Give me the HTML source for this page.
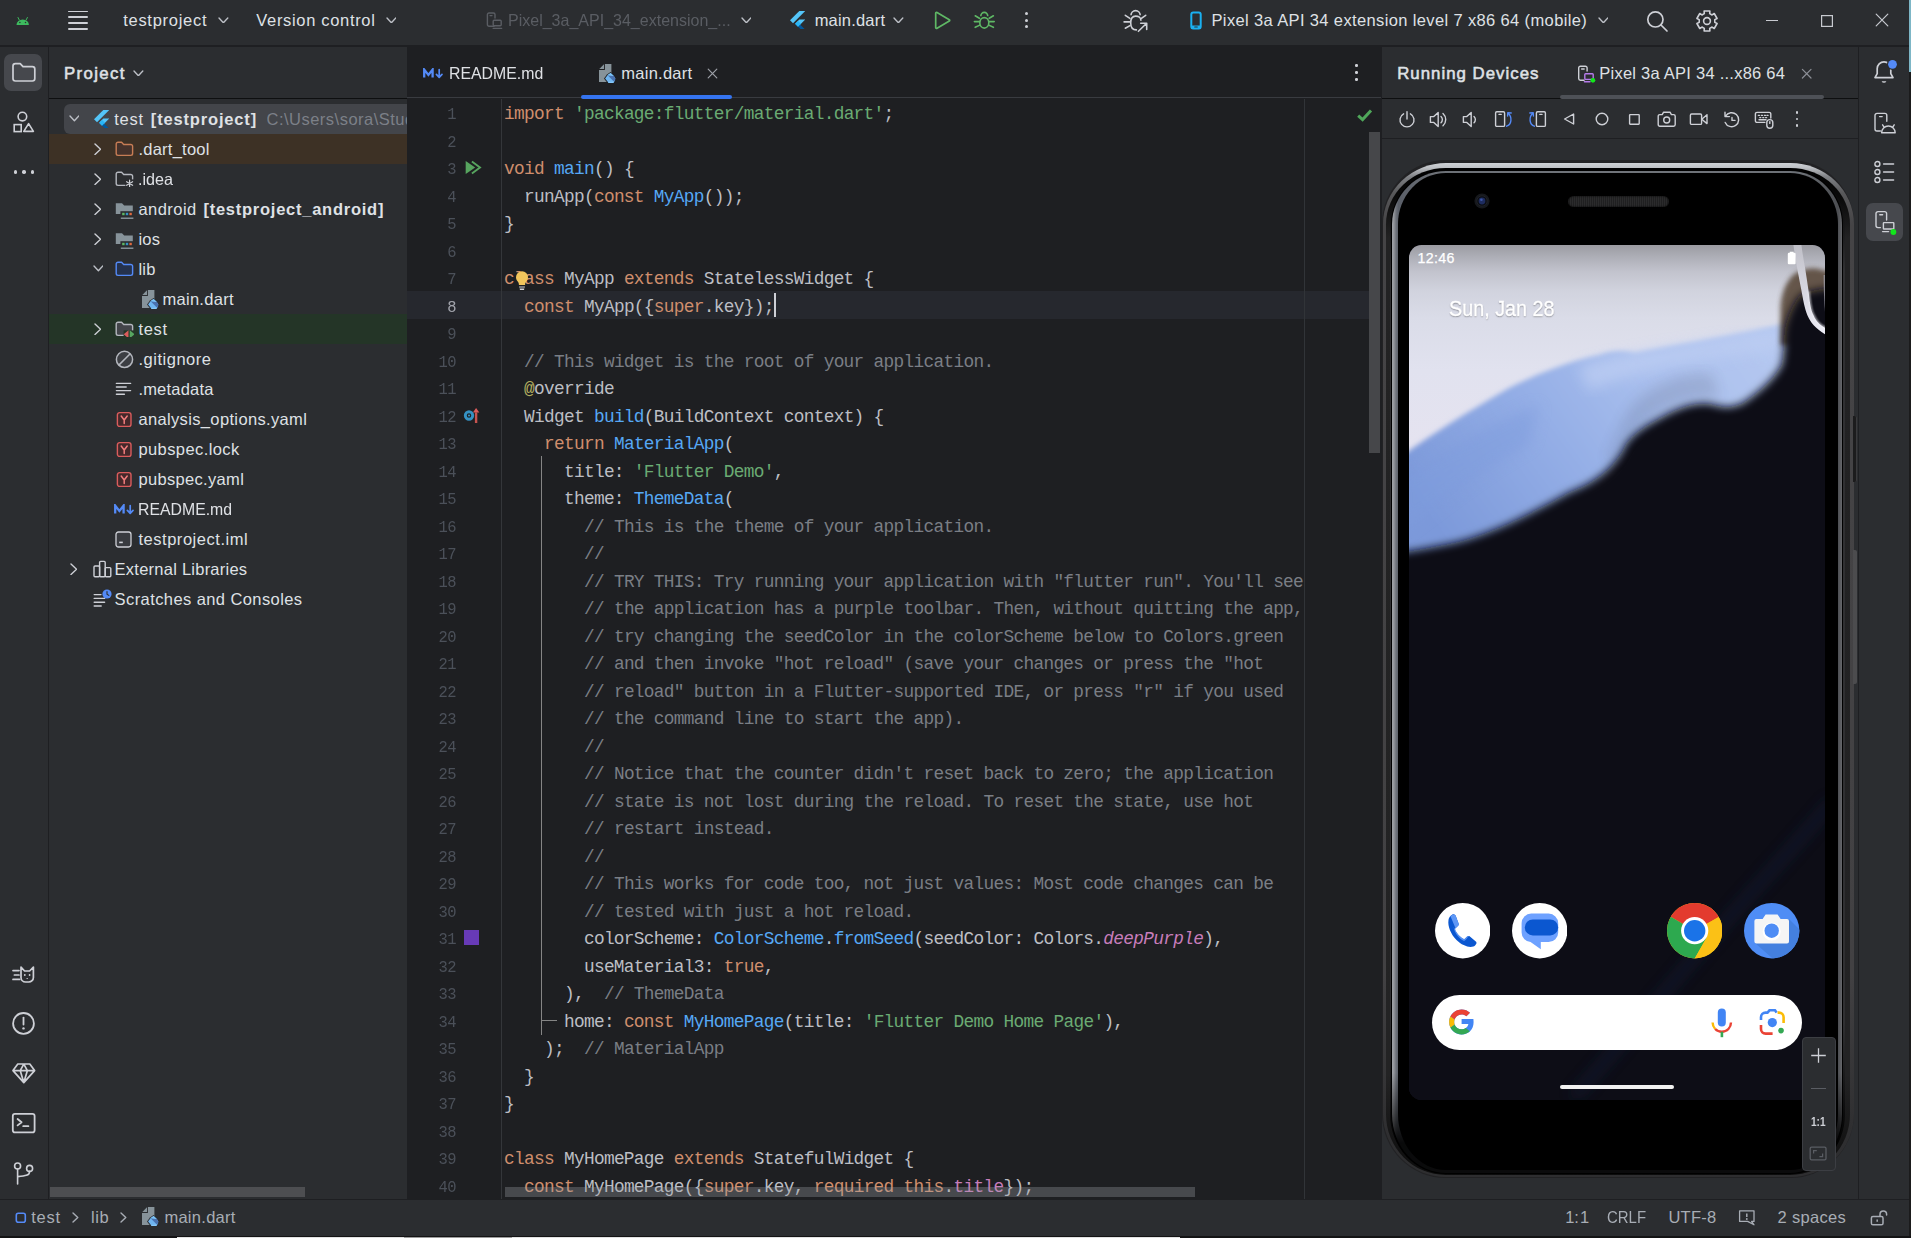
<!DOCTYPE html>
<html><head><meta charset="utf-8"><title>testproject – main.dart</title><style>
html,body{margin:0;padding:0;background:#2B2D30;overflow:hidden}
body{width:1911px;height:1238px;position:relative;font-family:"Liberation Sans",sans-serif;}
.t{position:absolute;white-space:pre;line-height:20px;font-family:"Liberation Sans",sans-serif;}
.m{font-family:"Liberation Mono",monospace;}
.r{position:absolute;display:block}
.code{position:absolute;white-space:pre;font-family:"Liberation Mono",monospace;font-size:17.8px;letter-spacing:-0.682px;line-height:27.5px;color:#BCBEC4;left:504px}
.ln{position:absolute;white-space:pre;font-family:"Liberation Mono",monospace;font-size:17.2px;letter-spacing:-0.6px;line-height:27.5px;color:#4B5059;text-align:right;width:60px;left:398px;transform:scaleX(0.9);transform-origin:100% 50%}
.k{color:#CF8E6D}.s{color:#6AAB73}.f{color:#56A8F5}.c{color:#7A7E85}.a{color:#B3AE60}.p{color:#C77DBB}
</style></head><body>
<!-- g_top -->
<div class="r" style="left:0px;top:0px;width:1909px;height:45px;background:#2B2D30;"></div>
<div class="r" style="left:0px;top:45px;width:1909px;height:2px;background:#1E1F22;"></div>
<svg class="r" style="left:16.3px;top:15.6px;" width="14" height="10" viewBox="0 0 14 10" fill="none"><path d="M0.5 9 A6.2 5.6 0 0 1 12.9 9 Z" fill="#3DBA5E"/><path d="M3.3 4 L2 1.5 M10.1 4 L11.4 1.5" stroke="#3DBA5E" stroke-width="1" stroke-linecap="round"/><circle cx="3.9" cy="6.4" r="0.75" fill="#2B2D30"/><circle cx="9.5" cy="6.4" r="0.75" fill="#2B2D30"/></svg>
<div class="r" style="left:68.3px;top:10.6px;width:20px;height:1.8px;background:#CED0D6;border-radius:1px;"></div>
<div class="r" style="left:68.3px;top:16.400000000000002px;width:20px;height:1.8px;background:#CED0D6;border-radius:1px;"></div>
<div class="r" style="left:68.3px;top:22.1px;width:20px;height:1.8px;background:#CED0D6;border-radius:1px;"></div>
<div class="r" style="left:68.3px;top:27.900000000000002px;width:20px;height:1.8px;background:#CED0D6;border-radius:1px;"></div>
<span class="t" style="left:123.20px;top:10px;line-height:20px;font-size:16.5px;color:#DFE1E5;letter-spacing:0.718px;">testproject</span>
<svg class="r" style="left:217.9px;top:16.5px;" width="10.8" height="6.8" viewBox="0 0 10.8 6.8" fill="none"><path d="M1 1 L5.40 5.80 L9.80 1" stroke="#BDC0C7" stroke-width="1.35" stroke-linecap="round" stroke-linejoin="round"/></svg>
<span class="t" style="left:256.30px;top:10px;line-height:20px;font-size:16.5px;color:#DFE1E5;letter-spacing:0.675px;">Version control</span>
<svg class="r" style="left:385.7px;top:16.5px;" width="10.8" height="6.8" viewBox="0 0 10.8 6.8" fill="none"><path d="M1 1 L5.40 5.80 L9.80 1" stroke="#BDC0C7" stroke-width="1.35" stroke-linecap="round" stroke-linejoin="round"/></svg>
<svg class="r" style="left:486px;top:12px;" width="17" height="18" viewBox="0 0 17 18" fill="none"><path d="M8.6 14.2 H3 A1.6 1.6 0 0 1 1.4 12.6 V2.6 A1.6 1.6 0 0 1 3 1 H7.4 A1.6 1.6 0 0 1 9 2.6 V6.6" stroke="#5A5D63" stroke-width="1.4"/><path d="M4 3.6 H6" stroke="#5A5D63" stroke-width="1.3" stroke-linecap="round"/><rect x="7.2" y="8.2" width="8" height="5.6" rx="1" stroke="#5A5D63" stroke-width="1.4"/><path d="M7.2 16.4 H15.6" stroke="#5A5D63" stroke-width="1.4" stroke-linecap="round"/></svg>
<span class="t" style="left:508.20px;top:10px;line-height:20px;font-size:16.5px;color:#5A5D63;transform:scaleX(0.9706);transform-origin:0 50%;">Pixel_3a_API_34_extension_...</span>
<svg class="r" style="left:740.7px;top:16.5px;" width="10.8" height="6.8" viewBox="0 0 10.8 6.8" fill="none"><path d="M1 1 L5.40 5.80 L9.80 1" stroke="#BDC0C7" stroke-width="1.35" stroke-linecap="round" stroke-linejoin="round"/></svg>
<svg class="r" style="left:789.6px;top:10.5px;" width="15.2" height="18.6" viewBox="0 0 15.2 18.6" fill="none"><path d="M9.3 0 L15.2 0 L3 12.2 L0 9.3 Z" fill="#54C5F8"/><path d="M9.3 8.6 L15.2 8.6 L8.1 15.7 L5.1 12.8 Z" fill="#54C5F8"/><path d="M5.1 12.8 L8.1 15.7 L11 18.6 L15.2 18.6 L8.1 11.5 Z" fill="#01579B"/><path d="M5.1 12.8 L8.1 9.9 L11 12.8 L8.1 15.7 Z" fill="#29B6F6"/></svg>
<span class="t" style="left:814.70px;top:10px;line-height:20px;font-size:16.5px;color:#DFE1E5;letter-spacing:0.190px;">main.dart</span>
<svg class="r" style="left:893.3px;top:16.5px;" width="10.8" height="6.8" viewBox="0 0 10.8 6.8" fill="none"><path d="M1 1 L5.40 5.80 L9.80 1" stroke="#BDC0C7" stroke-width="1.35" stroke-linecap="round" stroke-linejoin="round"/></svg>
<svg class="r" style="left:933px;top:9.5px;" width="20" height="21" viewBox="0 0 20 21" fill="none"><path d="M2.7 3.2 V17.6 a0.9 0.9 0 0 0 1.35 0.75 L16.3 11.1 a0.85 0.85 0 0 0 0 -1.45 L4.05 2.45 A0.9 0.9 0 0 0 2.7 3.2 Z" stroke="#5FB865" stroke-width="1.7" stroke-linejoin="round"/></svg>
<svg class="r" style="left:973px;top:9.5px;" width="23" height="21" viewBox="0 0 23 21" fill="none"><ellipse cx="11.3" cy="12.85" rx="4.5" ry="5.25" stroke="#5FB865" stroke-width="1.6"/><path d="M7.8 6.3 A3.5 3.9 0 0 1 14.8 6.3" stroke="#5FB865" stroke-width="1.6"/><path d="M2.2 5.8 L6.4 8.3 M20.4 5.8 L16.2 8.3 M1.4 11.6 H6.6 M16 11.6 H21.2 M2.2 17.3 L6.8 15.1 M20.4 17.3 L15.8 15.1" stroke="#5FB865" stroke-width="1.6" stroke-linecap="round"/></svg>
<div class="r" style="left:1025.4px;top:11.6px;width:3px;height:3px;background:#CED0D6;border-radius:50%;"></div>
<div class="r" style="left:1025.4px;top:18.5px;width:3px;height:3px;background:#CED0D6;border-radius:50%;"></div>
<div class="r" style="left:1025.4px;top:25.2px;width:3px;height:3px;background:#CED0D6;border-radius:50%;"></div>
<svg class="r" style="left:1123px;top:9px;" width="26" height="24" viewBox="0 0 26 24" fill="none"><path d="M8 6.3 A4.6 4.7 0 0 1 17.2 6.3" stroke="#CED0D6" stroke-width="1.6"/><path d="M17.9 11.3 C17.9 8.4 15.6 7.1 12.6 7.1 C9.6 7.1 7.7 9.4 7.7 14 C7.7 18.4 9.8 20.9 13.4 20.9" stroke="#CED0D6" stroke-width="1.6" stroke-linecap="round"/><path d="M2.3 6.3 L6.9 9.4 M1.1 12.9 H6.6 M2.3 19.2 L6.9 16.6 M22.7 6.3 L18.4 9.4" stroke="#CED0D6" stroke-width="1.6" stroke-linecap="round"/><path d="M15.4 22.3 L23.4 14.5 M17.7 14.3 H23.7 V20.4" stroke="#CED0D6" stroke-width="1.6" stroke-linecap="round" stroke-linejoin="round"/></svg>
<svg class="r" style="left:1189px;top:10.5px;" width="14" height="19" viewBox="0 0 14 19" fill="none"><rect x="2.3" y="1.6" width="9.4" height="15.8" rx="2" stroke="#1AB0F0" stroke-width="2"/><rect x="2" y="14.4" width="10" height="3.6" rx="1" fill="#1AB0F0"/><rect x="5.2" y="15.5" width="3.6" height="1.1" rx="0.55" fill="#2B2D30"/></svg>
<span class="t" style="left:1211.50px;top:10px;line-height:20px;font-size:16.5px;color:#DFE1E5;letter-spacing:0.366px;">Pixel 3a API 34 extension level 7 x86 64 (mobile)</span>
<svg class="r" style="left:1597.7px;top:16.5px;" width="10.8" height="6.8" viewBox="0 0 10.8 6.8" fill="none"><path d="M1 1 L5.40 5.80 L9.80 1" stroke="#BDC0C7" stroke-width="1.35" stroke-linecap="round" stroke-linejoin="round"/></svg>
<svg class="r" style="left:1645px;top:8.5px;" width="24" height="24" viewBox="0 0 24 24" fill="none"><circle cx="10.4" cy="10.4" r="7.6" stroke="#CED0D6" stroke-width="1.7"/><path d="M16 16 L22 22" stroke="#CED0D6" stroke-width="1.7" stroke-linecap="round"/></svg>
<svg class="r" style="left:1694.7px;top:8.5px;" width="24" height="24" viewBox="0 0 24 24" fill="none"><g transform="translate(12 12)"><path d="M-2.87 -10.00 L2.87 -10.00 L2.70 -7.42 L5.08 -6.05 L7.22 -7.48 L10.09 -2.52 L7.78 -1.37 L7.78 1.37 L10.09 2.52 L7.22 7.48 L5.08 6.05 L2.70 7.42 L2.87 10.00 L-2.87 10.00 L-2.70 7.42 L-5.08 6.05 L-7.22 7.48 L-10.09 2.52 L-7.78 1.37 L-7.78 -1.37 L-10.09 -2.52 L-7.22 -7.48 L-5.08 -6.05 L-2.70 -7.42 Z" stroke="#CED0D6" stroke-width="1.6" stroke-linejoin="round"/><circle r="3.4" stroke="#CED0D6" stroke-width="1.6"/></g></svg>
<div class="r" style="left:1766.4px;top:19.9px;width:12px;height:1.2px;background:#C8CAD0;"></div>
<svg class="r" style="left:1820px;top:13.6px;" width="14" height="14" viewBox="0 0 14 14" fill="none"><rect x="1.6" y="1.6" width="10.8" height="10.8" stroke="#C8CAD0" stroke-width="1.2"/></svg>
<svg class="r" style="left:1875.3px;top:13.3px;" width="14" height="14" viewBox="0 0 14 14" fill="none"><path d="M1.2 1.2 L12.8 12.8 M12.8 1.2 L1.2 12.8" stroke="#C8CAD0" stroke-width="1.2" stroke-linecap="round"/></svg>
<!-- g_left -->
<div class="r" style="left:0px;top:47px;width:48px;height:1152px;background:#2B2D30;"></div>
<div class="r" style="left:48px;top:47px;width:1px;height:1152px;background:#1E1F22;"></div>
<div class="r" style="left:49px;top:47px;width:358px;height:1152px;background:#2B2D30;"></div>
<div class="r" style="left:4px;top:54px;width:38px;height:37px;background:#46484D;border-radius:7px;"></div>
<svg class="r" style="left:11px;top:61px;" width="26" height="23" viewBox="0 0 26 23" fill="none"><path d="M2 5 A2.4 2.4 0 0 1 4.4 2.6 H9.2 L12 5.6 H21.4 A2.4 2.4 0 0 1 23.8 8 V17.6 A2.4 2.4 0 0 1 21.4 20 H4.4 A2.4 2.4 0 0 1 2 17.6 Z" stroke="#CED0D6" stroke-width="1.7" stroke-linejoin="round"/></svg>
<svg class="r" style="left:12px;top:110px;" width="24" height="24" viewBox="0 0 24 24" fill="none"><circle cx="10.4" cy="6.6" r="4.3" stroke="#CED0D6" stroke-width="1.6"/><rect x="2.2" y="14.6" width="7" height="7" stroke="#CED0D6" stroke-width="1.6"/><path d="M16.6 13.6 L21.4 21.4 H11.8 Z" stroke="#CED0D6" stroke-width="1.6" stroke-linejoin="round"/></svg>
<div class="r" style="left:13.700000000000001px;top:170.3px;width:3.4px;height:3.4px;background:#CED0D6;border-radius:50%;"></div>
<div class="r" style="left:22.2px;top:170.3px;width:3.4px;height:3.4px;background:#CED0D6;border-radius:50%;"></div>
<div class="r" style="left:30.7px;top:170.3px;width:3.4px;height:3.4px;background:#CED0D6;border-radius:50%;"></div>
<svg class="r" style="left:11px;top:964px;" width="26" height="21" viewBox="0 0 26 21" fill="none"><path d="M10 3.2 L13.6 7 H18.6 L22.4 3.2 V13.4 A4.6 4.6 0 0 1 17.8 18 H14.6 A4.6 4.6 0 0 1 10 13.4 Z" stroke="#CED0D6" stroke-width="1.7" stroke-linejoin="round"/><path d="M2 6.6 H8 M3.4 11 H8 M2 15.4 H8.6" stroke="#CED0D6" stroke-width="1.7" stroke-linecap="round"/><circle cx="13.8" cy="11" r="0.9" fill="#CED0D6"/><circle cx="18.6" cy="11" r="0.9" fill="#CED0D6"/><path d="M15.2 14 H17.2 L16.2 15.2 Z" fill="#CED0D6"/></svg>
<svg class="r" style="left:11px;top:1011px;" width="26" height="26" viewBox="0 0 26 26" fill="none"><circle cx="12.5" cy="12.4" r="10.4" stroke="#CED0D6" stroke-width="1.8"/><path d="M12.5 6.6 V13.6" stroke="#CED0D6" stroke-width="1.8" stroke-linecap="round"/><circle cx="12.5" cy="17.4" r="1.2" fill="#CED0D6"/></svg>
<svg class="r" style="left:11px;top:1062px;" width="26" height="23" viewBox="0 0 26 23" fill="none"><path d="M6.8 2 H18.8 L23.6 8.6 L12.8 20.6 L2 8.6 Z M2 8.6 H23.6 M9.2 8.6 L12.8 2.2 L16.4 8.6 L12.8 20.4 Z" stroke="#CED0D6" stroke-width="1.7" stroke-linejoin="round"/></svg>
<svg class="r" style="left:11px;top:1112px;" width="26" height="23" viewBox="0 0 26 23" fill="none"><rect x="1.8" y="1.8" width="21.8" height="18.6" rx="2.2" stroke="#CED0D6" stroke-width="1.8"/><path d="M6.6 7 L10.6 10.2 L6.6 13.4 M12.2 14.2 H17.4" stroke="#CED0D6" stroke-width="1.8" stroke-linecap="round" stroke-linejoin="round"/></svg>
<svg class="r" style="left:12px;top:1161px;" width="24" height="25" viewBox="0 0 24 25" fill="none"><circle cx="5.6" cy="5" r="3" stroke="#CED0D6" stroke-width="1.6"/><circle cx="17.6" cy="7.4" r="3" stroke="#CED0D6" stroke-width="1.6"/><path d="M5.6 8 V23 M17.6 10.4 C17.6 14.6 13 15 5.8 15.6" stroke="#CED0D6" stroke-width="1.6" stroke-linecap="round"/></svg>
<span class="t" style="left:64.00px;top:63px;line-height:21px;font-size:16.8px;color:#DFE1E5;letter-spacing:1.369px;-webkit-text-stroke:0.55px #DFE1E5;">Project</span>
<svg class="r" style="left:132.8px;top:69.7px;" width="10.8" height="6.8" viewBox="0 0 10.8 6.8" fill="none"><path d="M1 1 L5.40 5.80 L9.80 1" stroke="#BDC0C7" stroke-width="1.35" stroke-linecap="round" stroke-linejoin="round"/></svg>
<div class="r" style="left:49px;top:97.6px;width:358px;height:1.6px;background:#0E0F10;"></div>
<div class="r" style="left:64px;top:104px;width:343px;height:29.5px;background:#43454A;border-radius:6px 0 0 6px;"></div>
<div class="r" style="left:49px;top:133.5px;width:358px;height:30.3px;background:#3D3125;"></div>
<div class="r" style="left:49px;top:313.8px;width:358px;height:30px;background:#243527;"></div>
<svg class="r" style="left:68.7px;top:115.1px;" width="10.8" height="6.8" viewBox="0 0 10.8 6.8" fill="none"><path d="M1 1 L5.40 5.80 L9.80 1" stroke="#BDC0C7" stroke-width="1.35" stroke-linecap="round" stroke-linejoin="round"/></svg>
<svg class="r" style="left:94px;top:109.6px;" width="15.2" height="18.6" viewBox="0 0 15.2 18.6" fill="none"><path d="M9.3 0 L15.2 0 L3 12.2 L0 9.3 Z" fill="#54C5F8"/><path d="M9.3 8.6 L15.2 8.6 L8.1 15.7 L5.1 12.8 Z" fill="#54C5F8"/><path d="M5.1 12.8 L8.1 15.7 L11 18.6 L15.2 18.6 L8.1 11.5 Z" fill="#01579B"/><path d="M5.1 12.8 L8.1 9.9 L11 12.8 L8.1 15.7 Z" fill="#29B6F6"/></svg>
<span class="t" style="left:114.30px;top:109px;line-height:20px;font-size:16.5px;color:#DFE1E5;letter-spacing:0.702px;">test</span>
<span class="t" style="left:150.80px;top:109px;line-height:20px;font-size:16.5px;color:#DFE1E5;letter-spacing:0.838px;font-weight:700;">[testproject]</span>
<div class="r" style="left:266.5px;top:104px;width:140.5px;height:30px;overflow:hidden"><span class="t" style="left:0.00px;top:5px;line-height:20px;font-size:16.5px;color:#7C8088;letter-spacing:0.488px;">C:\Users\sora\StudioProjects</span></div>
<svg class="r" style="left:93.8px;top:142.75px;" width="7.6" height="12.5" viewBox="0 0 7.6 12.5" fill="none"><path d="M1 1 L6.60 6.25 L1 11.50" stroke="#CED0D6" stroke-width="1.4" stroke-linecap="round" stroke-linejoin="round"/></svg>
<span class="t" style="left:138.40px;top:139px;line-height:20px;font-size:16.5px;color:#DFE1E5;letter-spacing:0.245px;">.dart_tool</span>
<svg class="r" style="left:114.5px;top:139.7px;" width="19" height="17" viewBox="0 0 19 17" fill="none"><path d="M1.2 4 A1.8 1.8 0 0 1 3 2.2 H6.6 L8.7 4.5 H15.8 A1.8 1.8 0 0 1 17.6 6.3 V13.6 A1.8 1.8 0 0 1 15.8 15.4 H3 A1.8 1.8 0 0 1 1.2 13.6 Z" stroke="#C77D55" stroke-width="1.4" fill="#45322B" stroke-linejoin="round"/></svg>
<svg class="r" style="left:93.8px;top:172.75px;" width="7.6" height="12.5" viewBox="0 0 7.6 12.5" fill="none"><path d="M1 1 L6.60 6.25 L1 11.50" stroke="#CED0D6" stroke-width="1.4" stroke-linecap="round" stroke-linejoin="round"/></svg>
<span class="t" style="left:138.40px;top:169px;line-height:20px;font-size:16.5px;color:#DFE1E5;transform:scaleX(0.9782);transform-origin:0 50%;">.idea</span>
<svg class="r" style="left:114.5px;top:169.7px;" width="19" height="17" viewBox="0 0 19 17" fill="none"><path d="M1.2 4 A1.8 1.8 0 0 1 3 2.2 H6.6 L8.7 4.5 H15.8 A1.8 1.8 0 0 1 17.6 6.3 V13.6 A1.8 1.8 0 0 1 15.8 15.4 H3 A1.8 1.8 0 0 1 1.2 13.6 Z" stroke="#B4B7BE" stroke-width="1.4" fill="none" stroke-linejoin="round"/><rect x="10.4" y="9.4" width="9" height="8" fill="#2B2D30"/><path d="M14.6 10 V17 M11.6 11.7 L17.6 15.3 M17.6 11.7 L11.6 15.3" stroke="#CED0D6" stroke-width="1.2" stroke-linecap="round"/></svg>
<svg class="r" style="left:93.8px;top:202.75px;" width="7.6" height="12.5" viewBox="0 0 7.6 12.5" fill="none"><path d="M1 1 L6.60 6.25 L1 11.50" stroke="#CED0D6" stroke-width="1.4" stroke-linecap="round" stroke-linejoin="round"/></svg>
<span class="t" style="left:138.40px;top:199px;line-height:20px;font-size:16.5px;color:#DFE1E5;letter-spacing:0.476px;">android</span>
<span class="t" style="left:203.40px;top:199px;line-height:20px;font-size:16.5px;color:#DFE1E5;letter-spacing:0.749px;font-weight:700;">[testproject_android]</span>
<svg class="r" style="left:114.5px;top:200px;" width="20" height="20" viewBox="0 0 20 20" fill="none"><path d="M0.8 3.2 H7 L9.2 5.6 H17.8 V14 H0.8 Z" fill="#87939A"/><rect x="5.4" y="11.2" width="13.2" height="5.4" fill="#2B2D30"/><rect x="7.2" y="12.8" width="2.4" height="2.4" fill="#5FB865"/><rect x="10.8" y="12.8" width="2.4" height="2.4" fill="#3592C4"/><rect x="14.4" y="12.8" width="2.4" height="2.4" fill="#E0693E"/><rect x="5.8" y="17.6" width="12.6" height="1.2" fill="#9AA7B0"/></svg>
<svg class="r" style="left:93.8px;top:232.75px;" width="7.6" height="12.5" viewBox="0 0 7.6 12.5" fill="none"><path d="M1 1 L6.60 6.25 L1 11.50" stroke="#CED0D6" stroke-width="1.4" stroke-linecap="round" stroke-linejoin="round"/></svg>
<span class="t" style="left:138.40px;top:229px;line-height:20px;font-size:16.5px;color:#DFE1E5;letter-spacing:0.304px;">ios</span>
<svg class="r" style="left:114.5px;top:230px;" width="20" height="20" viewBox="0 0 20 20" fill="none"><path d="M0.8 3.2 H7 L9.2 5.6 H17.8 V14 H0.8 Z" fill="#87939A"/><rect x="5.4" y="11.2" width="13.2" height="5.4" fill="#2B2D30"/><rect x="7.2" y="12.8" width="2.4" height="2.4" fill="#5FB865"/><rect x="10.8" y="12.8" width="2.4" height="2.4" fill="#3592C4"/><rect x="14.4" y="12.8" width="2.4" height="2.4" fill="#E0693E"/><rect x="5.8" y="17.6" width="12.6" height="1.2" fill="#9AA7B0"/></svg>
<svg class="r" style="left:92.7px;top:265.1px;" width="10.8" height="6.8" viewBox="0 0 10.8 6.8" fill="none"><path d="M1 1 L5.40 5.80 L9.80 1" stroke="#BDC0C7" stroke-width="1.35" stroke-linecap="round" stroke-linejoin="round"/></svg>
<span class="t" style="left:138.40px;top:259px;line-height:20px;font-size:16.5px;color:#DFE1E5;letter-spacing:0.246px;">lib</span>
<svg class="r" style="left:114.5px;top:259.7px;" width="19" height="17" viewBox="0 0 19 17" fill="none"><path d="M1.2 4 A1.8 1.8 0 0 1 3 2.2 H6.6 L8.7 4.5 H15.8 A1.8 1.8 0 0 1 17.6 6.3 V13.6 A1.8 1.8 0 0 1 15.8 15.4 H3 A1.8 1.8 0 0 1 1.2 13.6 Z" stroke="#548AF7" stroke-width="1.4" fill="#25324D" stroke-linejoin="round"/></svg>
<span class="t" style="left:162.40px;top:289px;line-height:20px;font-size:16.5px;color:#DFE1E5;letter-spacing:0.303px;">main.dart</span>
<svg class="r" style="left:141.79999999999998px;top:289.9px;" width="18" height="20" viewBox="0 0 18 20" fill="none"><path d="M0 5.9 H5.9 V0 H12.4 V17.9 H0 Z" fill="#87939A"/><path d="M0.3 5 L5 0.3 V5 Z" fill="#87939A"/><path d="M11.6 8 L15.5 11.4 L17.2 14.1 L17 16.8 L14.9 20 H9.2 L5 14.5 L8 10.4 Z" fill="#2B2D30"/><path d="M11.6 9.1 L14.8 12 L16.2 14.2 L16 16.4 L14.3 19 H9.7 L6.1 14.4 L8.7 11 Z" fill="#6FB5F0"/><path d="M8.7 11.2 L14.9 12.1 L16.2 14.2 L16 16.6 L14.8 17.4 Z" fill="#4A72B0"/><path d="M11.6 9.1 L14.8 12 L8.7 11.1 Z" fill="#7CC4F8"/><path d="M9.7 19 H14.3 L14.9 17.6 L9 17.9 Z" fill="#86C8FA"/></svg>
<svg class="r" style="left:93.8px;top:322.75px;" width="7.6" height="12.5" viewBox="0 0 7.6 12.5" fill="none"><path d="M1 1 L6.60 6.25 L1 11.50" stroke="#CED0D6" stroke-width="1.4" stroke-linecap="round" stroke-linejoin="round"/></svg>
<span class="t" style="left:138.40px;top:319px;line-height:20px;font-size:16.5px;color:#DFE1E5;letter-spacing:0.702px;">test</span>
<svg class="r" style="left:114.5px;top:319.7px;" width="19" height="17" viewBox="0 0 19 17" fill="none"><path d="M1.2 4 A1.8 1.8 0 0 1 3 2.2 H6.6 L8.7 4.5 H15.8 A1.8 1.8 0 0 1 17.6 6.3 V13.6 A1.8 1.8 0 0 1 15.8 15.4 H3 A1.8 1.8 0 0 1 1.2 13.6 Z" stroke="#B4B7BE" stroke-width="1.4" fill="#43454A" stroke-linejoin="round"/><rect x="8.6" y="10.4" width="11" height="8" fill="#243527"/><path d="M13.5 10.2 V18.4 L8.7 14.3 Z" fill="#DB5C5C"/><path d="M14.7 10.2 V18.4 L19.5 14.3 Z" fill="#57A55F"/></svg>
<span class="t" style="left:138.40px;top:349px;line-height:20px;font-size:16.5px;color:#DFE1E5;letter-spacing:0.525px;">.gitignore</span>
<svg class="r" style="left:114.5px;top:350px;" width="19" height="19" viewBox="0 0 19 19" fill="none"><circle cx="9.5" cy="9.4" r="8.1" stroke="#B4B7BE" stroke-width="1.5" fill="#3C3E43"/><path d="M3.8 15.1 L15.2 3.7" stroke="#B4B7BE" stroke-width="1.5"/></svg>
<span class="t" style="left:138.40px;top:379px;line-height:20px;font-size:16.5px;color:#DFE1E5;letter-spacing:0.202px;">.metadata</span>
<svg class="r" style="left:115px;top:382px;" width="17" height="14" viewBox="0 0 17 14" fill="none"><path d="M1.4 1.4 H15.6 M1.4 5 H11.2 M1.4 8.6 H15.6 M1.4 12.2 H9.4" stroke="#CED0D6" stroke-width="1.4" stroke-linecap="round"/></svg>
<span class="t" style="left:138.40px;top:409px;line-height:20px;font-size:16.5px;color:#DFE1E5;letter-spacing:0.354px;">analysis_options.yaml</span>
<svg class="r" style="left:115.6px;top:410.5px;" width="17" height="17" viewBox="0 0 17 17" fill="none"><rect x="1.4" y="1.6" width="13.6" height="13.8" rx="2.2" fill="#45282A" stroke="#DB5C5C" stroke-width="1.4"/><path d="M5.2 5 L8.2 9 L11.2 5 M8.2 9 V12.4" stroke="#F27D7D" stroke-width="1.5" stroke-linecap="round" stroke-linejoin="round"/></svg>
<span class="t" style="left:138.40px;top:439px;line-height:20px;font-size:16.5px;color:#DFE1E5;letter-spacing:0.417px;">pubspec.lock</span>
<svg class="r" style="left:115.6px;top:440.5px;" width="17" height="17" viewBox="0 0 17 17" fill="none"><rect x="1.4" y="1.6" width="13.6" height="13.8" rx="2.2" fill="#45282A" stroke="#DB5C5C" stroke-width="1.4"/><path d="M5.2 5 L8.2 9 L11.2 5 M8.2 9 V12.4" stroke="#F27D7D" stroke-width="1.5" stroke-linecap="round" stroke-linejoin="round"/></svg>
<span class="t" style="left:138.40px;top:469px;line-height:20px;font-size:16.5px;color:#DFE1E5;letter-spacing:0.327px;">pubspec.yaml</span>
<svg class="r" style="left:115.6px;top:470.5px;" width="17" height="17" viewBox="0 0 17 17" fill="none"><rect x="1.4" y="1.6" width="13.6" height="13.8" rx="2.2" fill="#45282A" stroke="#DB5C5C" stroke-width="1.4"/><path d="M5.2 5 L8.2 9 L11.2 5 M8.2 9 V12.4" stroke="#F27D7D" stroke-width="1.5" stroke-linecap="round" stroke-linejoin="round"/></svg>
<span class="t" style="left:138.40px;top:499px;line-height:20px;font-size:16.5px;color:#DFE1E5;transform:scaleX(0.9592);transform-origin:0 50%;">README.md</span>
<svg class="r" style="left:113.6px;top:503.7px;" width="21" height="11" viewBox="0 0 21 11" fill="none"><path d="M1.2 9.6 V1.6 L5.4 7 L9.6 1.6 V9.6" stroke="#548AF7" stroke-width="2.3" stroke-linejoin="miter"/><path d="M16.2 1.6 V9 M13.4 6.4 L16.2 9.3 L19 6.4" stroke="#548AF7" stroke-width="1.7" stroke-linecap="round" stroke-linejoin="round"/></svg>
<span class="t" style="left:138.40px;top:529px;line-height:20px;font-size:16.5px;color:#DFE1E5;letter-spacing:0.537px;">testproject.iml</span>
<svg class="r" style="left:114.5px;top:530.5px;" width="17" height="17" viewBox="0 0 17 17" fill="none"><rect x="1" y="1" width="15" height="15" rx="2.4" fill="#393B40" stroke="#CED0D6" stroke-width="1.3"/><rect x="4.2" y="10.6" width="3.6" height="1.6" fill="#CED0D6"/></svg>
<svg class="r" style="left:69.8px;top:562.75px;" width="7.6" height="12.5" viewBox="0 0 7.6 12.5" fill="none"><path d="M1 1 L6.60 6.25 L1 11.50" stroke="#CED0D6" stroke-width="1.4" stroke-linecap="round" stroke-linejoin="round"/></svg>
<svg class="r" style="left:92.6px;top:560px;" width="19" height="18" viewBox="0 0 19 18" fill="none"><rect x="1" y="6" width="5.6" height="10.8" rx="1" stroke="#CED0D6" stroke-width="1.4"/><rect x="6.6" y="1.4" width="5.6" height="15.4" rx="1" stroke="#CED0D6" stroke-width="1.4"/><rect x="12.2" y="7.6" width="5.6" height="9.2" rx="1" stroke="#CED0D6" stroke-width="1.4"/></svg>
<span class="t" style="left:114.60px;top:559px;line-height:20px;font-size:16.5px;color:#DFE1E5;letter-spacing:0.242px;">External Libraries</span>
<svg class="r" style="left:92.6px;top:589px;" width="20" height="19" viewBox="0 0 20 19" fill="none"><path d="M1.2 5.6 H8 M1.2 9.4 H11.6 M1.2 13.2 H11.6 M1.2 17 H8.2" stroke="#CED0D6" stroke-width="1.4" stroke-linecap="round"/><circle cx="14" cy="5" r="4.6" fill="#548AF7"/><path d="M14 2.6 V5.2 L15.8 6.4" stroke="#2B2D30" stroke-width="1.1" stroke-linecap="round" fill="none"/></svg>
<span class="t" style="left:114.60px;top:589px;line-height:20px;font-size:16.5px;color:#DFE1E5;letter-spacing:0.412px;">Scratches and Consoles</span>
<div class="r" style="left:50px;top:1187px;width:255px;height:10px;background:#4D4E51;"></div>
<!-- g_editor -->
<div class="r" style="left:407px;top:47px;width:974px;height:1152px;background:#1E1F22;"></div>
<div class="r" style="left:407px;top:97px;width:974px;height:1px;background:#393B40;"></div>
<svg class="r" style="left:423px;top:67.9px;" width="21" height="11" viewBox="0 0 21 11" fill="none"><path d="M1.2 9.6 V1.6 L5.4 7 L9.6 1.6 V9.6" stroke="#548AF7" stroke-width="2.3" stroke-linejoin="miter"/><path d="M16.2 1.6 V9 M13.4 6.4 L16.2 9.3 L19 6.4" stroke="#548AF7" stroke-width="1.7" stroke-linecap="round" stroke-linejoin="round"/></svg>
<span class="t" style="left:448.50px;top:63px;line-height:20px;font-size:16.5px;color:#DFE1E5;transform:scaleX(0.9603);transform-origin:0 50%;">README.md</span>
<svg class="r" style="left:599.4000000000001px;top:64.30000000000001px;" width="18" height="20" viewBox="0 0 18 20" fill="none"><path d="M0 5.9 H5.9 V0 H12.4 V17.9 H0 Z" fill="#87939A"/><path d="M0.3 5 L5 0.3 V5 Z" fill="#87939A"/><path d="M11.6 8 L15.5 11.4 L17.2 14.1 L17 16.8 L14.9 20 H9.2 L5 14.5 L8 10.4 Z" fill="#1E1F22"/><path d="M11.6 9.1 L14.8 12 L16.2 14.2 L16 16.4 L14.3 19 H9.7 L6.1 14.4 L8.7 11 Z" fill="#6FB5F0"/><path d="M8.7 11.2 L14.9 12.1 L16.2 14.2 L16 16.6 L14.8 17.4 Z" fill="#4A72B0"/><path d="M11.6 9.1 L14.8 12 L8.7 11.1 Z" fill="#7CC4F8"/><path d="M9.7 19 H14.3 L14.9 17.6 L9 17.9 Z" fill="#86C8FA"/></svg>
<span class="t" style="left:621.30px;top:63px;line-height:20px;font-size:16.5px;color:#DFE1E5;letter-spacing:0.253px;">main.dart</span>
<svg class="r" style="left:706.5px;top:67.7px;" width="11" height="11" viewBox="0 0 11 11" fill="none"><path d="M1.2 1.2 L9.8 9.8 M9.8 1.2 L1.2 9.8" stroke="#9DA0A8" stroke-width="1.2" stroke-linecap="round"/></svg>
<div class="r" style="left:581px;top:95.2px;width:151.4px;height:3.8px;background:#3574F0;border-radius:2px;"></div>
<div class="r" style="left:1355.3px;top:64.39999999999999px;width:2.4px;height:2.4px;background:#CED0D6;border-radius:50%;"></div>
<div class="r" style="left:1355.3px;top:71.39999999999999px;width:2.4px;height:2.4px;background:#CED0D6;border-radius:50%;"></div>
<div class="r" style="left:1355.3px;top:78.39999999999999px;width:2.4px;height:2.4px;background:#CED0D6;border-radius:50%;"></div>
<div class="r" style="left:407px;top:291px;width:973px;height:28px;background:#26282E;"></div>
<div class="r" style="left:501px;top:99px;width:1.2px;height:1100px;background:#34363A;"></div>
<div class="r" style="left:1304px;top:99px;width:1px;height:1100px;background:#313438;"></div>
<div class="r" style="left:407px;top:99px;width:897px;height:1100px;overflow:hidden">
<div class="ln" style="top:2.15px;left:-10.6px;color:#4B5059">1</div>
<div class="code" style="top:2.15px;left:97px"><span class="k">import</span> <span class="s">'package:flutter/material.dart'</span>;</div>
<div class="ln" style="top:29.65px;left:-10.6px;color:#4B5059">2</div>
<div class="ln" style="top:57.15px;left:-10.6px;color:#4B5059">3</div>
<div class="code" style="top:57.15px;left:97px"><span class="k">void</span> <span class="f">main</span>() {</div>
<div class="ln" style="top:84.65px;left:-10.6px;color:#4B5059">4</div>
<div class="code" style="top:84.65px;left:97px">  runApp(<span class="k">const</span> <span class="f">MyApp</span>());</div>
<div class="ln" style="top:112.15px;left:-10.6px;color:#4B5059">5</div>
<div class="code" style="top:112.15px;left:97px">}</div>
<div class="ln" style="top:139.65px;left:-10.6px;color:#4B5059">6</div>
<div class="ln" style="top:167.15px;left:-10.6px;color:#4B5059">7</div>
<div class="code" style="top:167.15px;left:97px"><span class="k">class</span> MyApp <span class="k">extends</span> StatelessWidget {</div>
<div class="ln" style="top:194.65px;left:-10.6px;color:#A1A3AB">8</div>
<div class="code" style="top:194.65px;left:97px">  <span class="k">const</span> MyApp({<span class="k">super</span>.key});</div>
<div class="ln" style="top:222.15px;left:-10.6px;color:#4B5059">9</div>
<div class="ln" style="top:249.65px;left:-10.6px;color:#4B5059">10</div>
<div class="code" style="top:249.65px;left:97px">  <span class="c">// This widget is the root of your application.</span></div>
<div class="ln" style="top:277.15px;left:-10.6px;color:#4B5059">11</div>
<div class="code" style="top:277.15px;left:97px">  <span class="a">@</span>override</div>
<div class="ln" style="top:304.65px;left:-10.6px;color:#4B5059">12</div>
<div class="code" style="top:304.65px;left:97px">  Widget <span class="f">build</span>(BuildContext context) {</div>
<div class="ln" style="top:332.15px;left:-10.6px;color:#4B5059">13</div>
<div class="code" style="top:332.15px;left:97px">    <span class="k">return</span> <span class="f">MaterialApp</span>(</div>
<div class="ln" style="top:359.65px;left:-10.6px;color:#4B5059">14</div>
<div class="code" style="top:359.65px;left:97px">      title: <span class="s">'Flutter Demo'</span>,</div>
<div class="ln" style="top:387.15px;left:-10.6px;color:#4B5059">15</div>
<div class="code" style="top:387.15px;left:97px">      theme: <span class="f">ThemeData</span>(</div>
<div class="ln" style="top:414.65px;left:-10.6px;color:#4B5059">16</div>
<div class="code" style="top:414.65px;left:97px">        <span class="c">// This is the theme of your application.</span></div>
<div class="ln" style="top:442.15px;left:-10.6px;color:#4B5059">17</div>
<div class="code" style="top:442.15px;left:97px">        <span class="c">//</span></div>
<div class="ln" style="top:469.65px;left:-10.6px;color:#4B5059">18</div>
<div class="code" style="top:469.65px;left:97px">        <span class="c">// TRY THIS: Try running your application with "flutter run". You'll see</span></div>
<div class="ln" style="top:497.15px;left:-10.6px;color:#4B5059">19</div>
<div class="code" style="top:497.15px;left:97px">        <span class="c">// the application has a purple toolbar. Then, without quitting the app,</span></div>
<div class="ln" style="top:524.65px;left:-10.6px;color:#4B5059">20</div>
<div class="code" style="top:524.65px;left:97px">        <span class="c">// try changing the seedColor in the colorScheme below to Colors.green</span></div>
<div class="ln" style="top:552.15px;left:-10.6px;color:#4B5059">21</div>
<div class="code" style="top:552.15px;left:97px">        <span class="c">// and then invoke "hot reload" (save your changes or press the "hot</span></div>
<div class="ln" style="top:579.65px;left:-10.6px;color:#4B5059">22</div>
<div class="code" style="top:579.65px;left:97px">        <span class="c">// reload" button in a Flutter-supported IDE, or press "r" if you used</span></div>
<div class="ln" style="top:607.15px;left:-10.6px;color:#4B5059">23</div>
<div class="code" style="top:607.15px;left:97px">        <span class="c">// the command line to start the app).</span></div>
<div class="ln" style="top:634.65px;left:-10.6px;color:#4B5059">24</div>
<div class="code" style="top:634.65px;left:97px">        <span class="c">//</span></div>
<div class="ln" style="top:662.15px;left:-10.6px;color:#4B5059">25</div>
<div class="code" style="top:662.15px;left:97px">        <span class="c">// Notice that the counter didn't reset back to zero; the application</span></div>
<div class="ln" style="top:689.65px;left:-10.6px;color:#4B5059">26</div>
<div class="code" style="top:689.65px;left:97px">        <span class="c">// state is not lost during the reload. To reset the state, use hot</span></div>
<div class="ln" style="top:717.15px;left:-10.6px;color:#4B5059">27</div>
<div class="code" style="top:717.15px;left:97px">        <span class="c">// restart instead.</span></div>
<div class="ln" style="top:744.65px;left:-10.6px;color:#4B5059">28</div>
<div class="code" style="top:744.65px;left:97px">        <span class="c">//</span></div>
<div class="ln" style="top:772.15px;left:-10.6px;color:#4B5059">29</div>
<div class="code" style="top:772.15px;left:97px">        <span class="c">// This works for code too, not just values: Most code changes can be</span></div>
<div class="ln" style="top:799.65px;left:-10.6px;color:#4B5059">30</div>
<div class="code" style="top:799.65px;left:97px">        <span class="c">// tested with just a hot reload.</span></div>
<div class="ln" style="top:827.15px;left:-10.6px;color:#4B5059">31</div>
<div class="code" style="top:827.15px;left:97px">        colorScheme: <span class="f">ColorScheme</span>.<span class="f">fromSeed</span>(seedColor: Colors.<i class="p">deepPurple</i>),</div>
<div class="ln" style="top:854.65px;left:-10.6px;color:#4B5059">32</div>
<div class="code" style="top:854.65px;left:97px">        useMaterial3: <span class="k">true</span>,</div>
<div class="ln" style="top:882.15px;left:-10.6px;color:#4B5059">33</div>
<div class="code" style="top:882.15px;left:97px">      ),  <span class="c">// ThemeData</span></div>
<div class="ln" style="top:909.65px;left:-10.6px;color:#4B5059">34</div>
<div class="code" style="top:909.65px;left:97px">      home: <span class="k">const</span> <span class="f">MyHomePage</span>(title: <span class="s">'Flutter Demo Home Page'</span>),</div>
<div class="ln" style="top:937.15px;left:-10.6px;color:#4B5059">35</div>
<div class="code" style="top:937.15px;left:97px">    );  <span class="c">// MaterialApp</span></div>
<div class="ln" style="top:964.65px;left:-10.6px;color:#4B5059">36</div>
<div class="code" style="top:964.65px;left:97px">  }</div>
<div class="ln" style="top:992.15px;left:-10.6px;color:#4B5059">37</div>
<div class="code" style="top:992.15px;left:97px">}</div>
<div class="ln" style="top:1019.65px;left:-10.6px;color:#4B5059">38</div>
<div class="ln" style="top:1047.15px;left:-10.6px;color:#4B5059">39</div>
<div class="code" style="top:1047.15px;left:97px"><span class="k">class</span> MyHomePage <span class="k">extends</span> StatefulWidget {</div>
<div class="ln" style="top:1074.65px;left:-10.6px;color:#4B5059">40</div>
<div class="code" style="top:1074.65px;left:97px">  <span class="k">const</span> MyHomePage({<span class="k">super</span>.key, <span class="k">required</span> <span class="k">this</span>.<span class="p">title</span>});</div>
</div>
<div class="r" style="left:540.8px;top:456px;width:1.3px;height:579px;background:#858585;"></div>
<div class="r" style="left:541px;top:1019.8px;width:16px;height:1.2px;background:#858585;"></div>
<div class="r" style="left:774px;top:293px;width:2px;height:24px;background:#CED0D6;"></div>
<svg class="r" style="left:464px;top:160px;" width="19" height="16" viewBox="0 0 19 16" fill="none"><path d="M1.7 0.9 V14.1 L11.2 7.5 Z" fill="#57A55F"/><path d="M7.9 1.5 L16 7.5 L7.9 13.5" stroke="#57A55F" stroke-width="1.9" fill="none" stroke-linejoin="miter"/></svg>
<svg class="r" style="left:462px;top:406px;" width="19" height="19" viewBox="0 0 19 19" fill="none"><circle cx="7" cy="9.5" r="3.7" stroke="#3592C4" stroke-width="2.9"/><circle cx="7" cy="9.5" r="1.1" fill="#3592C4"/><path d="M12.9 6.4 H15.3 V17 H12.9 Z" fill="#C75450"/><path d="M10.9 6.6 L14.1 1.9 L17.3 6.6 Z" fill="#DB5C5C"/></svg>
<div class="r" style="left:464px;top:930px;width:15px;height:15px;background:#673AB7;"></div>
<svg class="r" style="left:514px;top:270px;" width="16" height="21" viewBox="0 0 16 21" fill="none"><path d="M8 1.3 A6 6 0 0 1 14 7.3 C14 9.4 12.9 10.8 11.9 12 C11.3 12.8 11.1 13.6 11.1 14.9 H4.9 C4.9 13.6 4.7 12.8 4.1 12 C3.1 10.8 2 9.4 2 7.3 A6 6 0 0 1 8 1.3 Z" fill="#F2C55C"/><path d="M5.1 16.6 H10.9 V17.6 H5.1 Z M5.6 18.6 H10.4 L10 20 H6 Z" fill="#CED0D6"/></svg>
<svg class="r" style="left:1355.5px;top:107.5px;" width="18" height="14" viewBox="0 0 18 14" fill="none"><path d="M2.2 7.6 L6.6 11.6 L15 2.6" stroke="#4FA75A" stroke-width="3" fill="none" stroke-linejoin="miter"/></svg>
<div class="r" style="left:1369px;top:131.5px;width:10.5px;height:321.5px;background:#46474A;"></div>
<div class="r" style="left:505px;top:1187px;width:689.5px;height:10px;background:rgba(160,162,168,0.32);"></div>
<div class="r" style="left:407px;top:1199px;width:974px;height:1px;background:#1E1F22;"></div>
<!-- g_right -->
<div class="r" style="left:1381px;top:47px;width:1px;height:1152px;background:#1E1F22;"></div>
<div class="r" style="left:1382px;top:47px;width:476px;height:1152px;background:#2B2D30;"></div>
<div class="r" style="left:1858px;top:47px;width:1px;height:1152px;background:#1E1F22;"></div>
<div class="r" style="left:1859px;top:47px;width:50px;height:1152px;background:#2B2D30;"></div>
<div class="r" style="left:1909px;top:0px;width:2px;height:72px;background:#7DB6C6;"></div>
<div class="r" style="left:1909px;top:72px;width:2px;height:1166px;background:#1B1B1C;"></div>
<span class="t" style="left:1397.20px;top:63px;line-height:21px;font-size:16.8px;color:#DFE1E5;letter-spacing:1.028px;-webkit-text-stroke:0.55px #DFE1E5;">Running Devices</span>
<svg class="r" style="left:1576.5px;top:64.5px;" width="19" height="19" viewBox="0 0 19 19" fill="none"><path d="M7.6 15.2 H3.4 A1.7 1.7 0 0 1 1.7 13.5 V3 A1.7 1.7 0 0 1 3.4 1.3 H8.4 A1.7 1.7 0 0 1 10.1 3 V6.6" stroke="#CED0D6" stroke-width="1.4"/><path d="M4.6 4 H7.2" stroke="#CED0D6" stroke-width="1.3" stroke-linecap="round"/><rect x="7.8" y="8.8" width="8.4" height="5.6" rx="0.8" stroke="#B57BEA" stroke-width="1.4"/><path d="M7.4 16.8 H13" stroke="#B57BEA" stroke-width="1.4" stroke-linecap="round"/><circle cx="15.9" cy="15.3" r="2.4" fill="#12E61C"/></svg>
<span class="t" style="left:1599.30px;top:63px;line-height:20px;font-size:16.5px;color:#DFE1E5;letter-spacing:0.242px;">Pixel 3a API 34 ...x86 64</span>
<svg class="r" style="left:1800.6px;top:68.4px;" width="12" height="12" viewBox="0 0 12 12" fill="none"><path d="M1.4 1.4 L10 10 M10 1.4 L1.4 10" stroke="#8C8F96" stroke-width="1.2" stroke-linecap="round"/></svg>
<div class="r" style="left:1382px;top:97.6px;width:476px;height:1.6px;background:#0E0F10;"></div>
<div class="r" style="left:1560px;top:94.8px;width:264px;height:4.4px;background:#4E5157;border-radius:2.2px;"></div>
<div class="r" style="left:1382px;top:138px;width:476px;height:1px;background:#1E1F22;"></div>
<svg class="r" style="left:1398px;top:110px;" width="18" height="19" viewBox="0 0 18 19" fill="none"><path d="M5.6 3.8 A7 7 0 1 0 12.4 3.8 M9 1.6 V9" stroke="#CED0D6" stroke-width="1.4" fill="none" stroke-linecap="round" stroke-linejoin="round"/></svg>
<svg class="r" style="left:1429px;top:110px;" width="20" height="19" viewBox="0 0 20 19" fill="none"><path d="M1.4 6.6 H4.8 L9.2 2.4 V16.6 L4.8 12.4 H1.4 Z M12 6.4 A4.4 4.4 0 0 1 12 12.8 M14 3.4 A8.4 8.4 0 0 1 14 15.8" stroke="#CED0D6" stroke-width="1.4" fill="none" stroke-linecap="round" stroke-linejoin="round"/></svg>
<svg class="r" style="left:1462px;top:110px;" width="16" height="19" viewBox="0 0 16 19" fill="none"><path d="M1.4 6.6 H4.8 L9.2 2.4 V16.6 L4.8 12.4 H1.4 Z M12 6.4 A4.4 4.4 0 0 1 12 12.8" stroke="#CED0D6" stroke-width="1.4" fill="none" stroke-linecap="round" stroke-linejoin="round"/></svg>
<svg class="r" style="left:1494px;top:110px;" width="20" height="19" viewBox="0 0 20 19" fill="none"><rect x="1.6" y="1.8" width="9" height="14.6" rx="1.2" stroke="#CED0D6" stroke-width="1.4" fill="none" stroke-linecap="round" stroke-linejoin="round"/><path d="M5 4.4 H7.2" stroke="#CED0D6" stroke-width="1.4" fill="none" stroke-linecap="round" stroke-linejoin="round"/><path d="M12.6 16.2 C17.6 14.6 18.6 7.4 14 3 M13.6 6 L13.8 2.6 L17.2 3" stroke="#548AF7" stroke-width="1.4" fill="none" stroke-linecap="round" stroke-linejoin="round"/></svg>
<svg class="r" style="left:1527px;top:110px;" width="20" height="19" viewBox="0 0 20 19" fill="none"><rect x="9.4" y="1.8" width="9" height="14.6" rx="1.2" stroke="#CED0D6" stroke-width="1.4" fill="none" stroke-linecap="round" stroke-linejoin="round"/><path d="M12.8 4.4 H15" stroke="#CED0D6" stroke-width="1.4" fill="none" stroke-linecap="round" stroke-linejoin="round"/><path d="M7.4 16.2 C2.4 14.6 1.4 7.4 6 3 M6.4 6 L6.2 2.6 L2.8 3" stroke="#548AF7" stroke-width="1.4" fill="none" stroke-linecap="round" stroke-linejoin="round"/></svg>
<svg class="r" style="left:1563px;top:112px;" width="13" height="14" viewBox="0 0 13 14" fill="none"><path d="M10.6 2 V12 L1.6 7 Z" stroke="#CED0D6" stroke-width="1.4" fill="none" stroke-linecap="round" stroke-linejoin="round"/></svg>
<svg class="r" style="left:1594px;top:111px;" width="16" height="16" viewBox="0 0 16 16" fill="none"><circle cx="8" cy="8" r="5.8" stroke="#CED0D6" stroke-width="1.4" fill="none" stroke-linecap="round" stroke-linejoin="round"/></svg>
<svg class="r" style="left:1627.5px;top:112.8px;" width="13" height="13" viewBox="0 0 13 13" fill="none"><rect x="1.6" y="1.6" width="9.6" height="9.6" rx="0.6" stroke="#CED0D6" stroke-width="1.4" fill="none" stroke-linecap="round" stroke-linejoin="round"/></svg>
<svg class="r" style="left:1657px;top:110px;" width="20" height="19" viewBox="0 0 20 19" fill="none"><path d="M2.8 4.6 H5.2 L6.6 2.2 H13 L14.4 4.6 H16.6 A1.6 1.6 0 0 1 18.2 6.2 V14.6 A1.6 1.6 0 0 1 16.6 16.2 H2.8 A1.6 1.6 0 0 1 1.2 14.6 V6.2 A1.6 1.6 0 0 1 2.8 4.6 Z" stroke="#CED0D6" stroke-width="1.4" fill="none" stroke-linecap="round" stroke-linejoin="round"/><circle cx="9.7" cy="10" r="3" stroke="#CED0D6" stroke-width="1.4" fill="none" stroke-linecap="round" stroke-linejoin="round"/></svg>
<svg class="r" style="left:1689px;top:112px;" width="20" height="15" viewBox="0 0 20 15" fill="none"><rect x="1.4" y="2" width="11.2" height="10.4" rx="1.2" stroke="#CED0D6" stroke-width="1.4" fill="none" stroke-linecap="round" stroke-linejoin="round"/><path d="M12.8 7.2 L18 2.8 V11.6 Z" stroke="#CED0D6" stroke-width="1.4" fill="none" stroke-linecap="round" stroke-linejoin="round"/></svg>
<svg class="r" style="left:1723px;top:109.5px;" width="18" height="19" viewBox="0 0 18 19" fill="none"><path d="M2.6 6.2 A7 7 0 1 1 2.2 12.4 M2 2.2 V6.6 H6.4 M9 7.4 V10.4 H12" stroke="#CED0D6" stroke-width="1.4" fill="none" stroke-linecap="round" stroke-linejoin="round"/></svg>
<svg class="r" style="left:1754px;top:110.5px;" width="21" height="19" viewBox="0 0 21 19" fill="none"><path d="M10.8 11.4 H3 A1.6 1.6 0 0 1 1.4 9.8 V3 A1.6 1.6 0 0 1 3 1.4 H15.2 A1.6 1.6 0 0 1 16.8 3 V7" stroke="#CED0D6" stroke-width="1.4" fill="none" stroke-linecap="round" stroke-linejoin="round"/><path d="M4.4 4.4 H5.4 M7.4 4.4 H8.4 M10.4 4.4 H11.4 M13 4.4 H14 M5.8 6.6 H6.8 M8.8 6.6 H9.8 M11.6 6.6 H12.6 M5 8.8 H12" stroke="#CED0D6" stroke-width="1.4" fill="none" stroke-linecap="round" stroke-linejoin="round" stroke-width="1.1"/><rect x="12.8" y="8.6" width="6" height="8.6" rx="3" stroke="#CED0D6" stroke-width="1.4" fill="none" stroke-linecap="round" stroke-linejoin="round"/><path d="M15.8 10.6 V12.4" stroke="#CED0D6" stroke-width="1.4" fill="none" stroke-linecap="round" stroke-linejoin="round"/></svg>
<div class="r" style="left:1795.8px;top:111.3px;width:2.6px;height:2.6px;background:#CED0D6;border-radius:50%;"></div>
<div class="r" style="left:1795.8px;top:117.7px;width:2.6px;height:2.6px;background:#CED0D6;border-radius:50%;"></div>
<div class="r" style="left:1795.8px;top:124.10000000000001px;width:2.6px;height:2.6px;background:#CED0D6;border-radius:50%;"></div>
<svg class="r" style="left:1872px;top:58px;" width="26" height="28" viewBox="0 0 26 28" fill="none"><path d="M3 19.6 H21 L18.8 15.6 V10.6 A6.8 6.8 0 0 0 5.2 10.6 V15.6 Z" stroke="#CED0D6" stroke-width="1.7" stroke-linejoin="round"/><path d="M9.6 23.2 A2.6 2.6 0 0 0 14.4 23.2 Z" fill="#CED0D6"/><circle cx="20.5" cy="6.3" r="5.6" fill="#2B2D30"/><circle cx="20.5" cy="6.3" r="4.4" fill="#548AF7"/></svg>
<svg class="r" style="left:1872px;top:111px;" width="26" height="25" viewBox="0 0 26 25" fill="none"><path d="M8.4 20 H5 A2 2 0 0 1 3 18 V4.4 A2 2 0 0 1 5 2.4 H12.8 A2 2 0 0 1 14.8 4.4 V10.2" stroke="#CED0D6" stroke-width="1.4" fill="none" stroke-linecap="round" stroke-linejoin="round" stroke-width="1.6"/><path d="M7.6 5.6 H10.2" stroke="#CED0D6" stroke-width="1.4" fill="none" stroke-linecap="round" stroke-linejoin="round"/><path d="M9.6 21.8 A6.8 6.8 0 0 1 23.2 21.8 Z M12.2 16.4 L10.6 13.8 M20.6 16.4 L22.2 13.8" stroke="#CED0D6" stroke-width="1.4" fill="none" stroke-linecap="round" stroke-linejoin="round" stroke-width="1.6"/></svg>
<svg class="r" style="left:1873px;top:159.6px;" width="24" height="8" viewBox="0 0 24 8" fill="none"><circle cx="4.4" cy="4" r="2.5" stroke="#CED0D6" stroke-width="1.4" fill="none" stroke-linecap="round" stroke-linejoin="round" stroke-width="1.5"/><path d="M10.6 4 H20.6" stroke="#CED0D6" stroke-width="1.4" fill="none" stroke-linecap="round" stroke-linejoin="round" stroke-width="1.6"/></svg>
<svg class="r" style="left:1873px;top:168px;" width="24" height="8" viewBox="0 0 24 8" fill="none"><circle cx="4.4" cy="4" r="2.5" stroke="#CED0D6" stroke-width="1.4" fill="none" stroke-linecap="round" stroke-linejoin="round" stroke-width="1.5"/><path d="M10.6 4 H20.6" stroke="#CED0D6" stroke-width="1.4" fill="none" stroke-linecap="round" stroke-linejoin="round" stroke-width="1.6"/></svg>
<svg class="r" style="left:1873px;top:176.4px;" width="24" height="8" viewBox="0 0 24 8" fill="none"><circle cx="4.4" cy="4" r="2.5" stroke="#CED0D6" stroke-width="1.4" fill="none" stroke-linecap="round" stroke-linejoin="round" stroke-width="1.5"/><path d="M10.6 4 H20.6" stroke="#CED0D6" stroke-width="1.4" fill="none" stroke-linecap="round" stroke-linejoin="round" stroke-width="1.6"/></svg>
<div class="r" style="left:1865.5px;top:203.4px;width:37.2px;height:37.6px;background:#46484D;border-radius:7px;"></div>
<svg class="r" style="left:1873px;top:210px;" width="26" height="26" viewBox="0 0 26 26" fill="none"><path d="M7.4 17.6 H5 A2 2 0 0 1 3 15.6 V3.6 A2 2 0 0 1 5 1.6 H11.6 A2 2 0 0 1 13.6 3.6 V10" stroke="#CED0D6" stroke-width="1.4" fill="none" stroke-linecap="round" stroke-linejoin="round" stroke-width="1.5"/><path d="M6.8 4.8 H9.6" stroke="#CED0D6" stroke-width="1.4" fill="none" stroke-linecap="round" stroke-linejoin="round"/><rect x="10.4" y="12.6" width="10.4" height="6.4" rx="0.6" stroke="#CED0D6" stroke-width="1.4" fill="none" stroke-linecap="round" stroke-linejoin="round" stroke-width="1.5"/><path d="M9.6 21.6 H15.6" stroke="#CED0D6" stroke-width="1.4" fill="none" stroke-linecap="round" stroke-linejoin="round" stroke-width="1.5"/><circle cx="20.4" cy="22" r="2.9" fill="#12E61C"/></svg>
<!-- g_phone -->
<div class="r" style="left:1381.70px;top:160.20px;width:472.30px;height:1017.60px;border-radius:64.0px 64.0px 64.0px 64.0px / 64.0px 64.0px 64.0px 64.0px;background:#222224;"></div>
<div class="r" style="left:1382.50px;top:163.10px;width:471.00px;height:1013.90px;border-radius:63.2px 63.5px 63.5px 63.2px / 61.1px 61.1px 63.2px 63.2px;background:linear-gradient(180deg,#CDD0D4 0,#BEC1C5 4.5px,#7E8084 14px,#58585A 30px,#454446 62px,#424143 80%,#2E2E30 96%);"></div>
<div class="r" style="left:1386.00px;top:167.90px;width:463.60px;height:1006.70px;border-radius:59.7px 59.6px 59.6px 59.7px / 56.3px 56.3px 60.8px 60.8px;background:linear-gradient(180deg,#000 0,#0A0A0A 30px,#222223 70px,#232324 90%,#0C0C0C 100%);"></div>
<div class="r" style="left:1389.90px;top:169.60px;width:454.80px;height:1004.20px;border-radius:55.8px 54.7px 54.7px 55.8px / 54.6px 54.6px 60.0px 60.0px;background:linear-gradient(180deg,#000 0,#1A1A1B 60px,#303032 100px,#303032 85%,#000 97%);"></div>
<div class="r" style="left:1390.90px;top:170.20px;width:451.90px;height:1003.00px;border-radius:54.8px 52.8px 52.8px 54.8px / 54.0px 54.0px 59.4px 59.4px;background:#000;"></div>
<div class="r" style="left:1391.60px;top:170.80px;width:450.40px;height:1001.80px;border-radius:54.1px 52.0px 52.0px 54.1px / 53.4px 53.4px 58.8px 58.8px;background:linear-gradient(180deg,rgba(0,0,0,0) 0,rgba(0,0,0,0) 90%,rgba(0,0,0,0.9) 97%),linear-gradient(90deg,#9EA1A6 0,#94979C 1.8px,#6E727A 4px,#5A5F68 6.4px,#6C7076 40px,#70747A 50%,#6C7076 calc(100% - 40px),#4C4E52 calc(100% - 4px),#66676B 100%);"></div>
<div class="r" style="left:1398.00px;top:173.30px;width:439.90px;height:996.50px;border-radius:47.7px 47.9px 47.9px 47.7px / 50.9px 50.9px 56.0px 56.0px;background:#000;"></div>
<svg class="r" style="left:1473px;top:192px;" width="18" height="18" viewBox="0 0 18 18" fill="none"><circle cx="9" cy="9" r="7.6" fill="#16181C"/><circle cx="9" cy="9" r="5.2" fill="#0B0D12" stroke="#23262C" stroke-width="0.8"/><circle cx="9" cy="9" r="3.4" fill="#1E2C5E"/><circle cx="8.4" cy="7.8" r="1.3" fill="#3C56A8"/></svg>
<div class="r" style="left:1568px;top:196px;width:101px;height:11px;background:#202021;border-radius:6px;box-shadow:inset 0 0 2px #000;background-image:repeating-linear-gradient(90deg,rgba(255,255,255,0.05) 0 1px,rgba(0,0,0,0) 1px 2px);"></div>
<div class="r" style="left:1853.4px;top:416px;width:3.6px;height:66px;background:#1C1C1D;border-radius:0 2px 2px 0;border-right:1px solid #3A3A3C;box-sizing:border-box;"></div>
<div class="r" style="left:1853.4px;top:550px;width:3.8px;height:134px;background:#4C4C4E;border-radius:0 2px 2px 0;"></div>
<div class="r" style="left:1409px;top:245px;width:416px;height:855px;border-radius:12.5px;overflow:hidden;background:#0E0E18">
<svg class="r" style="left:0;top:0" width="416" height="855" viewBox="0 0 416 855">
<defs>
<linearGradient id="wtop" gradientUnits="userSpaceOnUse" x1="0" y1="0" x2="0" y2="330"><stop offset="0" stop-color="#9B9BA2"/><stop offset="0.035" stop-color="#ADAEB6"/><stop offset="0.08" stop-color="#C2C3CD"/><stop offset="0.14" stop-color="#D1D3DE"/><stop offset="0.22" stop-color="#DADCE8"/><stop offset="0.38" stop-color="#E1E2EF"/><stop offset="0.6" stop-color="#E5E3F0"/><stop offset="1" stop-color="#E0D9E6"/></linearGradient><linearGradient id="wtube" gradientUnits="userSpaceOnUse" x1="0" y1="0" x2="0" y2="90"><stop offset="0" stop-color="#BFBFC7"/><stop offset="0.3" stop-color="#CFCFD8"/><stop offset="0.6" stop-color="#DADAE4"/><stop offset="1" stop-color="#EDEDF6"/></linearGradient>
<linearGradient id="wblue" gradientUnits="userSpaceOnUse" x1="340" y1="80" x2="40" y2="300"><stop offset="0" stop-color="#B4C7F0"/><stop offset="0.3" stop-color="#A9BFED"/><stop offset="0.6" stop-color="#94AEE6"/><stop offset="1" stop-color="#7C99DA"/></linearGradient>
<filter id="b3" x="-10%" y="-10%" width="120%" height="120%"><feGaussianBlur stdDeviation="2.6"/></filter>
<filter id="b4" x="-10%" y="-10%" width="120%" height="120%"><feGaussianBlur stdDeviation="4"/></filter>
<filter id="b6" x="-10%" y="-10%" width="120%" height="120%"><feGaussianBlur stdDeviation="7"/></filter>
<filter id="b2" x="-10%" y="-10%" width="120%" height="120%"><feGaussianBlur stdDeviation="1.2"/></filter>
</defs>
<rect width="416" height="855" fill="#0E0E18"/>
<rect width="416" height="330" fill="url(#wtop)"/>
<!-- blue -->
<path filter="url(#b3)" d="M-10 213 C20 191 60 166 100 143 C140 123 170 114 190 110 C203 105 215 105 226 108 C260 101 330 89 382 77 L386 140 L330 175 L230 200 L180 250 L60 310 L-10 320 Z" fill="url(#wblue)"/>
<path filter="url(#b6)" d="M170 122 C215 106 300 98 372 86 L372 104 C300 112 230 124 180 146 Z" fill="#BDCEF3" opacity="0.75"/>
<path filter="url(#b6)" d="M-10 235 C30 210 80 180 130 160 L120 200 C80 220 30 260 -10 290 Z" fill="#7F9CDD" opacity="0.5"/>
<!-- brown dust plume -->
<path filter="url(#b3)" d="M371.5 100 L371.5 62 C372 50 376 38 384 30 C392 24 402 22 410 24 L424 28 L424 100 Z" fill="#5A4A3A" opacity="0.9"/>
<!-- black main -->
<path filter="url(#b4)" d="M-20 309 C10 305 40 300 60 294 C100 281 130 264 161 247 C190 236 204 222 214 205 C220 190 238 180 255 171 C270 163 286 157 301 159 C312 162 322 164 334 158 C352 146 366 133 373 119 C375.5 104 375 92 376 84 C378 74 382 64 387 56 C391 49 398 45 424 43 L440 43 L440 880 L-20 880 Z" fill="#0E0E18"/>
<!-- haze of dust over blue near the boundary -->
<path filter="url(#b6)" d="M204 222 C210 202 228 178 256 164 C280 154 296 150 310 156 L304 130 C276 124 240 142 224 160 C212 176 206 196 198 212 Z" fill="#20202E" opacity="0.13"/>
<!-- tube -->
<path d="M384.3 -1 L392.3 -1 C393.4 8 394.8 16 395.9 21.7 C397.2 30 398.4 38 399.4 44.8 C400 50 400.6 55 401.2 59 C402 64 403.2 68 404.7 70.5 C406 73.6 407.6 76 409.2 77.6 C411.4 80 413.8 81.8 418 83.6 L418 90.4 C412 86.8 408 84 404.7 80.3 C402 77.4 400 74 398.5 70.5 C397 67 396 63 395 59 C394 54 393 49 392.3 44.8 C390.8 37 389.2 29 387.9 21.7 C386.6 14 385.3 7 384.3 -1 Z" fill="url(#wtube)"/>
<path d="M399.6 46 C400.2 51 400.7 55 401.3 59 C402.1 64 403.3 68 404.8 70.6 C406.1 73.7 407.7 76.1 409.3 77.7 C411.5 80.1 413.9 81.9 418 83.7" stroke="#F4F4FA" stroke-width="1.4" fill="none" filter="url(#b2)"/>
<path d="M414.6 30 L417 30 L417 74 C415.6 66 414.8 52 414.6 30 Z" fill="#9A9AA4" opacity="0.8"/>
<!-- subtle streaks bottom -->
<path filter="url(#b6)" d="M424 556 C390 596 350 640 310 684 C270 730 220 790 165 852" stroke="#172042" stroke-width="10" fill="none" opacity="0.45"/>
</svg>

</div>
<span class="t" style="left:1417.60px;top:249px;line-height:18px;font-size:14.2px;color:#FFFFFF;letter-spacing:0.316px;-webkit-text-stroke:0.25px #fff;">12:46</span>
<svg class="r" style="left:1786.5px;top:250.5px;" width="10" height="14" viewBox="0 0 10 14" fill="none"><path d="M0.8 3 A1.2 1.2 0 0 1 2 1.8 H2.8 V0.8 H6.6 V1.8 H7.4 A1.2 1.2 0 0 1 8.6 3 V12.2 A1 1 0 0 1 7.6 13.2 H1.8 A1 1 0 0 1 0.8 12.2 Z" fill="#FFFFFF"/></svg>
<span class="t" style="left:1448.60px;top:296px;line-height:26px;font-size:21.4px;color:#FFFFFF;transform:scaleX(0.9245);transform-origin:0 50%;text-shadow:0 0.5px 1.5px rgba(0,0,0,0.4);-webkit-text-stroke:0.35px #fff;">Sun, Jan 28</span>
<svg class="r" style="left:1434.8px;top:903.4px;" width="55.4" height="55.4" viewBox="0 0 55.4 55.4" fill="none"><circle cx="27.7" cy="27.7" r="27.7" fill="#FFFFFF"/><g transform="translate(27.7 27.7)"><path d="M-8.4 -16.2 C-10.4 -17 -13.6 -14 -14.2 -10.6 C-15.2 -4.4 -11.8 3.8 -6.2 9.4 C-0.6 15 6.4 17.2 10.6 15.8 C12.8 15 14.6 12.4 13.4 11 L7.2 5.8 C6.2 5 5 5.2 4.2 6 L1.6 8.6 C-2.6 6.6 -6.4 2.2 -8 -1.8 L-4.8 -4.6 C-4 -5.4 -3.8 -6.4 -4.2 -7.4 L-7 -15 C-7.3 -15.7 -7.8 -16 -8.4 -16.2 Z" fill="#0B57D0"/><path d="M-8.4 -16.2 C-9.6 -16.6 -11 -15.8 -12.2 -14.4 L-7.4 -3 C-6.8 -1.6 -7.4 0 -8 -1.8 L-4.8 -4.6 C-4 -5.4 -3.8 -6.4 -4.2 -7.4 L-7 -15 C-7.3 -15.7 -7.8 -16 -8.4 -16.2 Z" fill="#5E97F6"/><path d="M-9 -4 C-7 1.6 -2.6 6.6 1.6 8.6 L4.2 6 C4.8 5.4 5.6 5.2 6.4 5.4 C4.6 6.8 3.6 9.4 1.4 10.4 C-3.6 8 -8.6 2 -9 -4 Z" fill="#5E97F6" opacity="0.9"/></g></svg>
<svg class="r" style="left:1511.9px;top:903.4px;" width="55.4" height="55.4" viewBox="0 0 55.4 55.4" fill="none"><circle cx="27.7" cy="27.7" r="27.7" fill="#FFFFFF"/><path d="M19.2 10.6 H36.6 A9.6 9.6 0 0 1 46.2 20.2 V29.4 A9.6 9.6 0 0 1 36.6 39 H28.8 V46.2 L18.6 39 A9.6 9.6 0 0 1 9.6 29.4 V20.2 A9.6 9.6 0 0 1 19.2 10.6 Z" fill="#6EA1FF"/><rect x="12.8" y="16.4" width="33.4" height="16" rx="8" fill="#0B57D0"/></svg>
<svg class="r" style="left:1666.9px;top:903.4px;" width="55.4" height="55.4" viewBox="0 0 55.4 55.4" fill="none"><defs><clipPath id="cc"><circle cx="27.7" cy="27.7" r="27.7"/></clipPath></defs><g clip-path="url(#cc)"><rect width="56" height="56" fill="#FBC116"/><path d="M27.7 27.7 L3.7 13.8 L-6 -4 H60 V13.9 H27.7 Z" fill="#E33B2E"/><path d="M27.7 27.7 L51.7 13.9 H27.7 Z" fill="#E33B2E"/><path d="M27.7 27.7 L3.7 13.8 L-4 30 L10 60 L27.7 55.4 L39.7 34.6 Z" fill="#2DA94F"/><path d="M27.7 27.7 L39.7 34.6 L27.7 55.4 L60 60 V13.9 H51.7 Z" fill="#FBC116"/></g><circle cx="27.7" cy="27.7" r="13.6" fill="#FFFFFF"/><circle cx="27.7" cy="27.7" r="10.7" fill="#1A73E8"/></svg>
<svg class="r" style="left:1744.4px;top:903.4px;" width="55.4" height="55.4" viewBox="0 0 55.4 55.4" fill="none"><defs><clipPath id="cm"><circle cx="27.7" cy="27.7" r="27.7"/></clipPath></defs><circle cx="27.7" cy="27.7" r="27.7" fill="#4F8DF5"/><g clip-path="url(#cm)"><path d="M45 16 L62 33 V62 H36 L11 40 Z" fill="#4480DF"/></g><path d="M21.6 11.4 H33.6 L36.6 16 H43 A2 2 0 0 1 45 18 V38.6 A2 2 0 0 1 43 40.6 H12.4 A2 2 0 0 1 10.4 38.6 V18 A2 2 0 0 1 12.4 16 H18.6 Z" fill="#F5F5F5"/><circle cx="27.7" cy="28.6" r="9" fill="#FFFFFF"/><circle cx="27.7" cy="27.7" r="7.2" fill="#4F8DF5"/></svg>
<div class="r" style="left:1432.2px;top:994.8px;width:369.4px;height:55.2px;background:#FFFFFF;border-radius:27.6px;"></div>
<svg class="r" style="left:1448.6px;top:1009.4px;" width="25.2" height="25.8" viewBox="-0.4 0 25.2 25.8" fill="none"><path d="M24 10.1 H12.2 V14.9 H19 C18.4 18 15.7 20.3 12.2 20.3 C8.1 20.3 4.8 17 4.8 12.9 S8.1 5.5 12.2 5.5 C14 5.5 15.7 6.1 17 7.3 L20.6 3.7 C18.4 1.6 15.5 0.4 12.2 0.4 C5.3 0.4 -0.3 6 -0.3 12.9 S5.3 25.4 12.2 25.4 C19.4 25.4 24.2 20.3 24.2 13.2 C24.2 12.1 24.1 11.1 24 10.1 Z" fill="#4285F4"/><path d="M1 7.4 L5.2 10.5 C6.3 7.6 9 5.5 12.2 5.5 C14 5.5 15.7 6.1 17 7.3 L20.6 3.7 C18.4 1.6 15.5 0.4 12.2 0.4 C7.3 0.4 3.1 3.2 1 7.4 Z" fill="#EA4335"/><path d="M12.2 25.4 C15.4 25.4 18.3 24.2 20.4 22.3 L16.4 19 C15.2 19.8 13.8 20.3 12.2 20.3 C9 20.3 6.3 18.2 5.2 15.4 L1 18.6 C3.1 22.6 7.3 25.4 12.2 25.4 Z" fill="#34A853"/><path d="M5.2 15.4 C4.9 14.6 4.8 13.8 4.8 12.9 S4.9 11.2 5.2 10.5 L1 7.4 C0.2 9 -0.3 10.9 -0.3 12.9 S0.2 16.8 1 18.6 Z" fill="#FBBC05"/></svg>
<svg class="r" style="left:1710.5px;top:1007.5px;" width="22" height="30" viewBox="0 0 22 30" fill="none"><rect x="6.8" y="0.6" width="8" height="18" rx="4" fill="#4285F4"/><path d="M1.6 14.6 A9.2 9.2 0 0 0 4.2 21" stroke="#FBBC05" stroke-width="2.4" fill="none"/><path d="M4.2 21 A9.2 9.2 0 0 0 17.4 21 A9.2 9.2 0 0 0 20 14.6" stroke="#EA4335" stroke-width="2.4" fill="none"/><rect x="9.6" y="23.8" width="2.6" height="5.4" fill="#34A853"/></svg>
<svg class="r" style="left:1758.8px;top:1009px;" width="27" height="27" viewBox="0 0 27 27" fill="none"><path d="M2 11 V8.2 A4.6 4.6 0 0 1 6.6 3.6 H8.6 L10.6 1.2 H16 L17.6 3.6" stroke="#4285F4" stroke-width="2.6" fill="none" stroke-linejoin="round"/><path d="M18.6 3.6 H20 A4.6 4.6 0 0 1 24.6 8.2 V14" stroke="#FBBC05" stroke-width="2.6" fill="none"/><path d="M2 16 V20 A4.6 4.6 0 0 0 6.6 24.6 H13.6" stroke="#EA4335" stroke-width="2.6" fill="none"/><circle cx="13.3" cy="13.6" r="4.6" fill="#4285F4"/><circle cx="22" cy="21.6" r="2.8" fill="#34A853"/></svg>
<div class="r" style="left:1560px;top:1085.2px;width:114px;height:3.4px;background:#F2F2F2;border-radius:2px;"></div>
<div class="r" style="left:1801.6px;top:1036.6px;width:34.6px;height:134.6px;background:#2B2D30;border:1px solid #3C3E43;border-radius:4px;box-sizing:border-box;"></div>
<svg class="r" style="left:1809.6px;top:1046.6px;" width="17" height="17" viewBox="0 0 17 17" fill="none"><path d="M8.5 1.2 V15.8 M1.2 8.5 H15.8" stroke="#CED0D6" stroke-width="1.3"/></svg>
<div class="r" style="left:1810.8px;top:1087.6px;width:15.6px;height:1.2px;background:#5A5D63;"></div>
<span class="t" style="left:1811.20px;top:1114px;line-height:16px;font-size:12.5px;color:#CED0D6;font-weight:700;transform:scaleX(0.8081);transform-origin:0 50%;">1:1</span>
<svg class="r" style="left:1809.2px;top:1145.6px;" width="19" height="16" viewBox="0 0 19 16" fill="none"><rect x="1.2" y="1.2" width="15.8" height="12.6" rx="1.4" stroke="#5A5D63" stroke-width="1.3"/><path d="M4.6 7.6 V4.6 H7.8 M13.6 7.4 V10.6 H10.4" stroke="#5A5D63" stroke-width="1.2"/></svg>
<!-- g_status -->
<div class="r" style="left:0px;top:1199px;width:1909px;height:1px;background:#1E1F22;"></div>
<div class="r" style="left:0px;top:1200px;width:1909px;height:36px;background:#2B2D30;"></div>
<svg class="r" style="left:15px;top:1212px;" width="12" height="12" viewBox="0 0 12 12" fill="none"><rect x="1.3" y="1.3" width="9" height="9" rx="2" stroke="#548AF7" stroke-width="1.6"/></svg>
<span class="t" style="left:31.30px;top:1207px;line-height:20px;font-size:16.5px;color:#A8ADB5;letter-spacing:0.735px;">test</span>
<svg class="r" style="left:72.2px;top:1211.9px;" width="6.8" height="11" viewBox="0 0 6.8 11" fill="none"><path d="M1 1 L5.80 5.50 L1 10.00" stroke="#A8ADB5" stroke-width="1.4" stroke-linecap="round" stroke-linejoin="round"/></svg>
<span class="t" style="left:91.00px;top:1207px;line-height:20px;font-size:16.5px;color:#A8ADB5;letter-spacing:0.546px;">lib</span>
<svg class="r" style="left:120.4px;top:1211.9px;" width="6.8" height="11" viewBox="0 0 6.8 11" fill="none"><path d="M1 1 L5.80 5.50 L1 10.00" stroke="#A8ADB5" stroke-width="1.4" stroke-linecap="round" stroke-linejoin="round"/></svg>
<svg class="r" style="left:142.2px;top:1207.3000000000002px;" width="18" height="20" viewBox="0 0 18 20" fill="none"><path d="M0 5.9 H5.9 V0 H12.4 V17.9 H0 Z" fill="#87939A"/><path d="M0.3 5 L5 0.3 V5 Z" fill="#87939A"/><path d="M11.6 8 L15.5 11.4 L17.2 14.1 L17 16.8 L14.9 20 H9.2 L5 14.5 L8 10.4 Z" fill="#2B2D30"/><path d="M11.6 9.1 L14.8 12 L16.2 14.2 L16 16.4 L14.3 19 H9.7 L6.1 14.4 L8.7 11 Z" fill="#6FB5F0"/><path d="M8.7 11.2 L14.9 12.1 L16.2 14.2 L16 16.6 L14.8 17.4 Z" fill="#4A72B0"/><path d="M11.6 9.1 L14.8 12 L8.7 11.1 Z" fill="#7CC4F8"/><path d="M9.7 19 H14.3 L14.9 17.6 L9 17.9 Z" fill="#86C8FA"/></svg>
<span class="t" style="left:164.40px;top:1207px;line-height:20px;font-size:16.5px;color:#A8ADB5;letter-spacing:0.278px;">main.dart</span>
<span class="t" style="left:1565.30px;top:1207px;line-height:20px;font-size:16.5px;color:#A8ADB5;">1</span>
<span class="t" style="left:1574.30px;top:1207px;line-height:20px;font-size:16.5px;color:#A8ADB5;">:</span>
<span class="t" style="left:1579.90px;top:1207px;line-height:20px;font-size:16.5px;color:#A8ADB5;">1</span>
<span class="t" style="left:1607.40px;top:1207px;line-height:20px;font-size:16.5px;color:#A8ADB5;transform:scaleX(0.9051);transform-origin:0 50%;">CRLF</span>
<span class="t" style="left:1668.40px;top:1207px;line-height:20px;font-size:16.5px;color:#A8ADB5;letter-spacing:0.264px;">UTF-8</span>
<svg class="r" style="left:1738px;top:1209px;" width="18" height="18" viewBox="0 0 18 18" fill="none"><path d="M1.6 1.8 H16 V12.4 H13.6 L16 15.8 L9.6 12.4 H1.6 Z" stroke="#A8ADB5" stroke-width="1.3" stroke-linejoin="round"/><path d="M8.8 4.4 V8" stroke="#A8ADB5" stroke-width="1.5"/><circle cx="8.8" cy="10" r="0.9" fill="#A8ADB5"/></svg>
<span class="t" style="left:1777.60px;top:1207px;line-height:20px;font-size:16.5px;color:#A8ADB5;letter-spacing:0.309px;">2 spaces</span>
<svg class="r" style="left:1870px;top:1209px;" width="19" height="18" viewBox="0 0 19 18" fill="none"><rect x="1.4" y="7.4" width="11.6" height="8.4" rx="1.6" stroke="#A8ADB5" stroke-width="1.5"/><path d="M7.2 10.4 V12.8" stroke="#A8ADB5" stroke-width="1.5"/><path d="M10 7.2 V5.2 A3.3 3.3 0 0 1 16.6 5.2 V6" stroke="#A8ADB5" stroke-width="1.5" stroke-linecap="round"/></svg>
<div class="r" style="left:0px;top:1236px;width:1911px;height:2px;background:#141415;"></div>
<div class="r" style="left:177px;top:1236.5px;width:1003px;height:1.5px;background:#E2E2E2;"></div>
<div class="r" style="left:404px;top:1236.5px;width:108px;height:1.5px;background:#9C9C9C;"></div>
</body></html>
